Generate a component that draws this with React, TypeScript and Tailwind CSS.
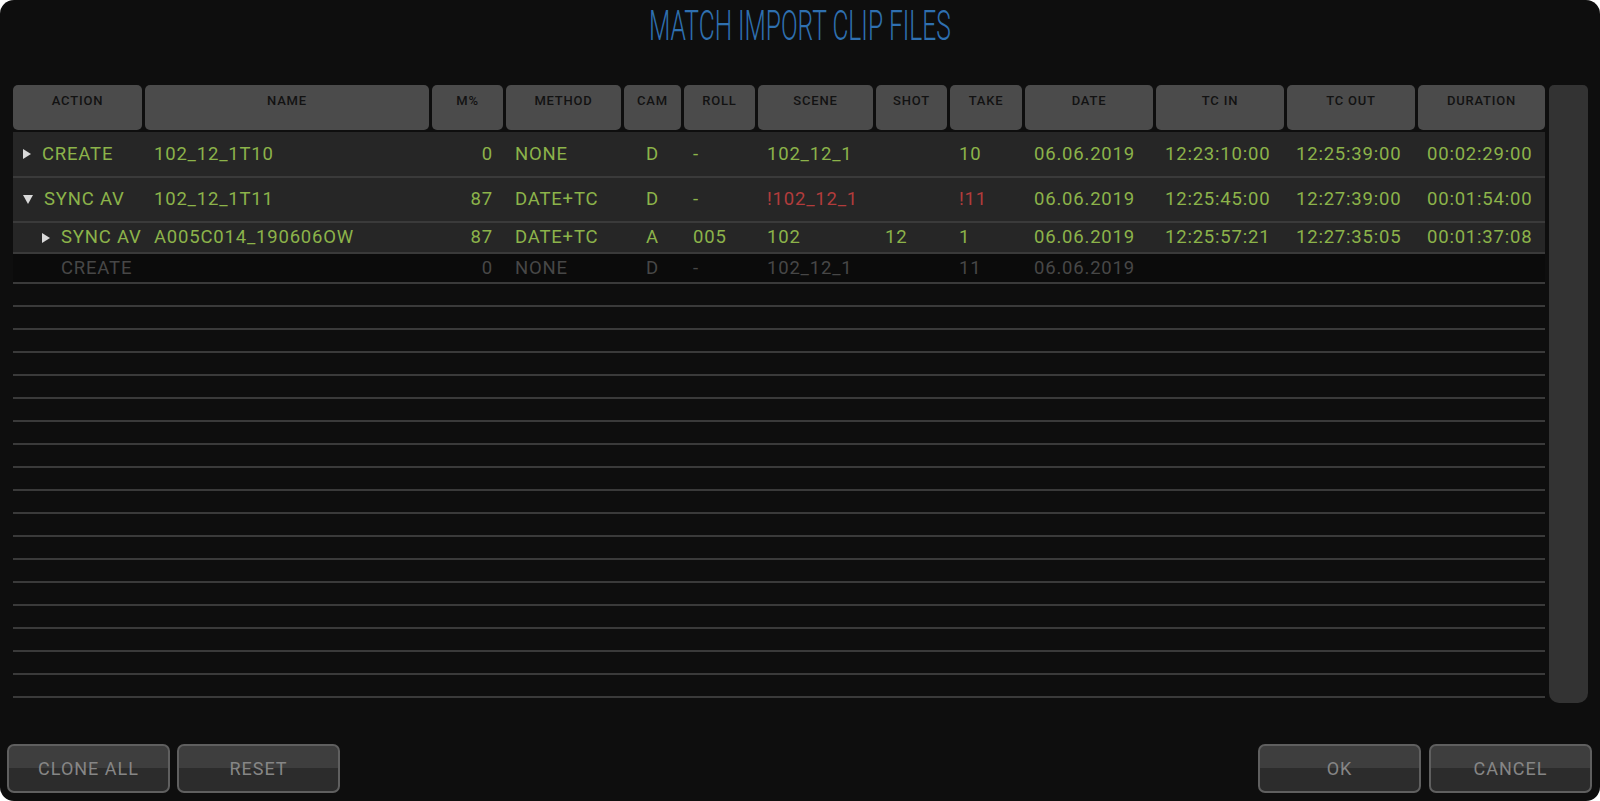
import React from "react";

const GRID =
  "grid grid-cols-[129px_284px_71px_115px_57px_71px_115px_71px_72px_128px_128px_128px_127px] gap-x-[3px]";

const HEADERS = ["ACTION", "NAME", "M%", "METHOD", "CAM", "ROLL", "SCENE", "SHOT", "TAKE", "DATE", "TC IN", "TC OUT", "DURATION"];

type Clip = {
  action: string;
  arrow?: "right" | "down";
  indent?: boolean;
  dim?: boolean;
  height: string;
  cells: string[];
};

// row heights include the 2px bottom rule
const CLIPS: Clip[] = [
  {
    action: "CREATE",
    arrow: "right",
    height: "h-[46px]",
    cells: ["102_12_1T10", "0", "NONE", "D", "-", "102_12_1", "", "10", "06.06.2019", "12:23:10:00", "12:25:39:00", "00:02:29:00"],
  },
  {
    action: "SYNC AV",
    arrow: "down",
    height: "h-[45px]",
    cells: ["102_12_1T11", "87", "DATE+TC", "D", "-", "!102_12_1", "", "!11", "06.06.2019", "12:25:45:00", "12:27:39:00", "00:01:54:00"],
  },
  {
    action: "SYNC AV",
    arrow: "right",
    indent: true,
    height: "h-[31px]",
    cells: ["A005C014_190606OW", "87", "DATE+TC", "A", "005", "102", "12", "1", "06.06.2019", "12:25:57:21", "12:27:35:05", "00:01:37:08"],
  },
  {
    action: "CREATE",
    indent: true,
    dim: true,
    height: "h-[30px]",
    cells: ["", "0", "NONE", "D", "-", "102_12_1", "", "11", "06.06.2019", "", "", ""],
  },
];

function Arrow({ dir }: { dir: "right" | "down" }) {
  if (dir === "down") {
    return (
      <svg width="10" height="9" viewBox="0 0 10 9" className="shrink-0">
        <polygon points="0,0 10,0 5,9" fill="#d9d9d9" />
      </svg>
    );
  }
  return (
    <svg width="8" height="10" viewBox="0 0 8 10" className="shrink-0">
      <polygon points="0,0 8,5 0,10" fill="#d9d9d9" />
    </svg>
  );
}

function ClipRow({ clip }: { clip: Clip }) {
  const base = clip.dim ? "text-[#474747]" : "text-[#8cb34a]";
  return (
    <div
      className={`${GRID} ${clip.height} items-center border-b-2 border-[#3a3a3a] ${
        clip.dim ? "bg-[#0b0b0b]" : "bg-[#262626]"
      } ${base}`}
    >
      <div className={`flex items-center gap-[11px] ${clip.indent ? "pl-[29px]" : "pl-[10px]"}`}>
        {clip.arrow && <Arrow dir={clip.arrow} />}
        <span className={clip.arrow ? "" : "pl-[19px]"}>{clip.action}</span>
      </div>
      {clip.cells.map((c, i) => {
        const red = c.startsWith("!");
        const align = i === 1 ? "text-right pr-[10px]" : i === 3 ? "text-center" : "pl-[9px]";
        return (
          <div key={i} className={`${align} whitespace-nowrap ${red ? "text-[#b23c3c]" : ""}`}>
            {c}
          </div>
        );
      })}
    </div>
  );
}

function Button({ label }: { label: string }) {
  return (
    <button className="w-[163px] h-[49px] rounded-[7px] border-2 border-[#5f5f5f] bg-[linear-gradient(to_bottom,#3e3e3e_50%,#2c2c2c_50%)] text-[18px] tracking-[1px] text-[#868686]">
      {label}
    </button>
  );
}

export default function App() {
  return (
    <div className="w-[1600px] h-[801px] bg-white font-[Roboto,sans-serif]">
      <div className="w-full h-full rounded-[14px] bg-[#0e0e0e] flex flex-col overflow-hidden">
        <div className="h-[85px] pt-[2px] flex justify-center">
          <h1 className="h-[48px] leading-[48px] text-[42px] font-light text-[#2f70b0] scale-x-[0.585] whitespace-nowrap">
            MATCH IMPORT CLIP FILES
          </h1>
        </div>

        <div className="h-[618px] flex">
          <div className="ml-[13px] w-[1532px] flex flex-col">
            <div className={`${GRID} h-[45px]`}>
              {HEADERS.map((h) => (
                <div
                  key={h}
                  className="rounded-[5px] bg-[#4b4b4b] pt-[8px] text-center text-[13px] font-medium leading-[16px] tracking-[0.8px] text-[#121212]"
                >
                  {h}
                </div>
              ))}
            </div>
            <div className="mt-[2px] text-[18.5px] tracking-[0.8px] leading-none">
              {CLIPS.map((c, i) => (
                <ClipRow key={i} clip={c} />
              ))}
              {Array.from({ length: 18 }).map((_, i) => (
                <div key={i} className="h-[23px] border-b-2 border-[#3a3a3a]" />
              ))}
            </div>
          </div>
          <div className="ml-[4px] w-[39px] h-full rounded-t-[5px] rounded-b-[10px] bg-[#333333]" />
        </div>

        <div className="flex-1 flex items-end justify-between px-[7px] pb-[8px]">
          <div className="flex gap-[7px]">
            <Button label="CLONE ALL" />
            <Button label="RESET" />
          </div>
          <div className="flex gap-[8px] pr-[1px]">
            <Button label="OK" />
            <Button label="CANCEL" />
          </div>
        </div>
      </div>
    </div>
  );
}
